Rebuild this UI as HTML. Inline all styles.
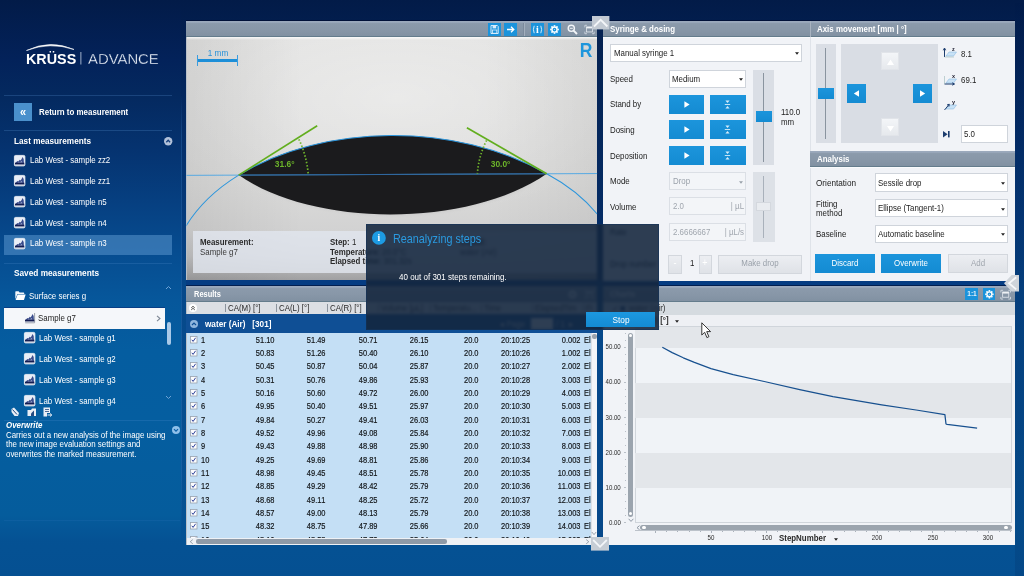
<!DOCTYPE html><html><head><meta charset="utf-8"><title>KRÜSS ADVANCE</title><style>
*{box-sizing:border-box;margin:0;padding:0}
html,body{width:1024px;height:576px;overflow:hidden}
body{position:relative;font-family:"Liberation Sans",sans-serif;font-size:7.9px;color:#222;
 background:linear-gradient(180deg,#021b48 0px,#032256 60px,#04306c 150px,#053c7d 220px,#06488a 290px,#064e90 420px,#055294 520px,#055092 576px)}
div{position:absolute}
.t{white-space:pre;line-height:14px;height:14px;transform:scaleX(0.878)}
.n{font-kerning:none;font-size:9px;color:#121518;transform:scaleX(0.83);-webkit-text-stroke:0.18px #121518}
.b{font-weight:bold}
.w{color:#fff}
.hdr{background:linear-gradient(180deg,#9caabd 0,#9aa8bb 1.3px,#8b9aab 2.6px,#8897a8 55%,#8191a2 100%);border-bottom:1px solid #647c8c;box-shadow:0 1px 0 #f9fafc,0 -1px 0 rgba(0,8,40,0.55)}
.pnl{background:#f1f3f7}
.combo{background:#fff;border:1px solid #cfd4db}
.dis{background:#f3f5f8;border:1px solid #dbdfe5}
.btn{background:linear-gradient(180deg,#1c95dc,#148bd2)}
.ubtn{background:linear-gradient(180deg,#f3f5f8,#e6e9ed);border:1px solid #e1e4e9}
.dbtn{background:linear-gradient(180deg,#eceef2,#dfe2e7);border:1px solid #d3d7dd}
svg{position:absolute;overflow:visible}
</style></head><body><div id="root" style="left:0;top:0;width:1024px;height:576px;will-change:transform">
<div style="left:0.0px;top:0.0px;width:181.0px;height:540.0px;background:linear-gradient(180deg,#021b48 0px,#03225a 60px,#04295f 95px,#053370 150px,#063f80 200px,#064c90 250px,#06579b 300px,#055da0 350px,#055ea0 420px,#055c9c 515px,#055294 540px)"></div>
<div style="left:180.7px;top:95.0px;width:1.0px;height:433.0px;background:linear-gradient(180deg,rgba(60,130,200,0),rgba(60,130,200,0.3) 40px,rgba(60,130,200,0.3) 380px,rgba(60,130,200,0))"></div>
<div style="left:4.0px;top:94.5px;width:168.0px;height:1.0px;background:rgba(90,150,215,0.25)"></div>
<div style="left:4.0px;top:130.0px;width:168.0px;height:1.0px;background:rgba(90,150,215,0.25)"></div>
<div style="left:4.0px;top:263.0px;width:168.0px;height:1.0px;background:rgba(90,150,215,0.22)"></div>
<div style="left:4.0px;top:420.0px;width:176.0px;height:1.0px;background:rgba(90,150,215,0.2)"></div>
<div style="left:4.0px;top:520.0px;width:176.0px;height:1.0px;background:rgba(90,150,215,0.1)"></div>
<svg style="left:24px;top:40px" width="140" height="28" viewBox="0 0 140 28"><path d="M2.5 10.5 Q26 -1 50 9.5 Q26 1.5 2.5 10.5Z" fill="#fff" stroke="#fff" stroke-width="0.6"/><rect x="56.5" y="12" width="0.8" height="12.5" fill="#c8d4e6"/></svg>
<div class="t" style="left:25.6px;transform-origin:0 50%;top:47.77px;font-size:15.10px;line-height:21px;height:21px;transform:scaleX(0.95);font-weight:bold;color:#fff">KRÜSS</div>
<div class="t" style="left:87.6px;transform-origin:0 50%;top:47.77px;font-size:15.10px;line-height:21px;height:21px;transform:scaleX(0.985);color:#eef2f8;-webkit-text-stroke:0.3px #04265e">ADVANCE</div>
<div style="left:14.0px;top:103.0px;width:18.0px;height:18.0px;background:#4a90cc"></div>
<div class="t" style="left:-77.0px;width:200px;text-align:center;transform-origin:50% 50%;top:104.97px;font-size:12.53px;color:#fff;font-weight:bold">«</div>
<div class="t" style="left:38.5px;transform-origin:0 50%;top:105.38px;font-size:9.00px;transform:scaleX(0.883);font-weight:bold;color:#fff">Return to measurement</div>
<div class="t" style="left:14.3px;transform-origin:0 50%;top:133.68px;font-size:9.00px;transform:scaleX(0.911);font-weight:bold;color:#fff">Last measurements</div>
<svg style="left:163.8px;top:136.5px" width="8.4" height="8.4" viewBox="0 0 8.4 8.4"><circle cx="4.2" cy="4.2" r="4.2" fill="#b2c1d9"/><path d="M2.3 5.2 L4.2 3.2 L6.1 5.2" stroke="#17407c" stroke-width="1.3" fill="none"/></svg>
<div style="left:4.0px;top:235.0px;width:168.0px;height:19.5px;background:rgba(90,150,205,0.55)"></div>
<svg style="left:14px;top:154.54999999999998px" width="11.3" height="11.3" viewBox="0 0 11.3 11.3"><rect x="0.4" y="0.4" width="10.5" height="10.5" rx="1.2" fill="#e9eef7" stroke="#f6f8fb" stroke-width="0.8"/><path d="M1.4 8 L3.4 5.9 L4.3 6.6 L5.8 4.7 L6.7 5.5 L8.7 2 L9.7 4.2 L9.9 8Z" fill="#3a4c8c"/><path d="M3.4 7.4 L4.4 6.9 L6 7.3 L7.6 6.2 L8.6 7.4Z" fill="#c7d0e6"/><rect x="1" y="7.7" width="9.3" height="1.9" fill="#141d52"/><rect x="1" y="9.6" width="9.3" height="0.9" fill="#b4bccd"/></svg>
<div class="t" style="left:29.5px;transform-origin:0 50%;top:153.18px;font-size:9.00px;color:#fff">Lab West - sample zz2</div>
<svg style="left:14px;top:175.25px" width="11.3" height="11.3" viewBox="0 0 11.3 11.3"><rect x="0.4" y="0.4" width="10.5" height="10.5" rx="1.2" fill="#e9eef7" stroke="#f6f8fb" stroke-width="0.8"/><path d="M1.4 8 L3.4 5.9 L4.3 6.6 L5.8 4.7 L6.7 5.5 L8.7 2 L9.7 4.2 L9.9 8Z" fill="#3a4c8c"/><path d="M3.4 7.4 L4.4 6.9 L6 7.3 L7.6 6.2 L8.6 7.4Z" fill="#c7d0e6"/><rect x="1" y="7.7" width="9.3" height="1.9" fill="#141d52"/><rect x="1" y="9.6" width="9.3" height="0.9" fill="#b4bccd"/></svg>
<div class="t" style="left:29.5px;transform-origin:0 50%;top:173.88px;font-size:9.00px;color:#fff">Lab West - sample zz1</div>
<svg style="left:14px;top:196.15px" width="11.3" height="11.3" viewBox="0 0 11.3 11.3"><rect x="0.4" y="0.4" width="10.5" height="10.5" rx="1.2" fill="#e9eef7" stroke="#f6f8fb" stroke-width="0.8"/><path d="M1.4 8 L3.4 5.9 L4.3 6.6 L5.8 4.7 L6.7 5.5 L8.7 2 L9.7 4.2 L9.9 8Z" fill="#3a4c8c"/><path d="M3.4 7.4 L4.4 6.9 L6 7.3 L7.6 6.2 L8.6 7.4Z" fill="#c7d0e6"/><rect x="1" y="7.7" width="9.3" height="1.9" fill="#141d52"/><rect x="1" y="9.6" width="9.3" height="0.9" fill="#b4bccd"/></svg>
<div class="t" style="left:29.5px;transform-origin:0 50%;top:194.78px;font-size:9.00px;color:#fff">Lab West - sample n5</div>
<svg style="left:14px;top:217.04999999999998px" width="11.3" height="11.3" viewBox="0 0 11.3 11.3"><rect x="0.4" y="0.4" width="10.5" height="10.5" rx="1.2" fill="#e9eef7" stroke="#f6f8fb" stroke-width="0.8"/><path d="M1.4 8 L3.4 5.9 L4.3 6.6 L5.8 4.7 L6.7 5.5 L8.7 2 L9.7 4.2 L9.9 8Z" fill="#3a4c8c"/><path d="M3.4 7.4 L4.4 6.9 L6 7.3 L7.6 6.2 L8.6 7.4Z" fill="#c7d0e6"/><rect x="1" y="7.7" width="9.3" height="1.9" fill="#141d52"/><rect x="1" y="9.6" width="9.3" height="0.9" fill="#b4bccd"/></svg>
<div class="t" style="left:29.5px;transform-origin:0 50%;top:215.68px;font-size:9.00px;color:#fff">Lab West - sample n4</div>
<svg style="left:14px;top:237.75px" width="11.3" height="11.3" viewBox="0 0 11.3 11.3"><rect x="0.4" y="0.4" width="10.5" height="10.5" rx="1.2" fill="#e9eef7" stroke="#f6f8fb" stroke-width="0.8"/><path d="M1.4 8 L3.4 5.9 L4.3 6.6 L5.8 4.7 L6.7 5.5 L8.7 2 L9.7 4.2 L9.9 8Z" fill="#3a4c8c"/><path d="M3.4 7.4 L4.4 6.9 L6 7.3 L7.6 6.2 L8.6 7.4Z" fill="#c7d0e6"/><rect x="1" y="7.7" width="9.3" height="1.9" fill="#141d52"/><rect x="1" y="9.6" width="9.3" height="0.9" fill="#b4bccd"/></svg>
<div class="t" style="left:29.5px;transform-origin:0 50%;top:236.38px;font-size:9.00px;color:#fff">Lab West - sample n3</div>
<div class="t" style="left:14.3px;transform-origin:0 50%;top:265.68px;font-size:9.00px;transform:scaleX(0.919);font-weight:bold;color:#fff">Saved measurements</div>
<svg style="left:14.8px;top:291.4px" width="11" height="9.2" viewBox="0 0 11 9.2"><path d="M0.3 0.9 Q0.3 0.3 0.9 0.3 H3.6 L4.6 1.5 H8.6 Q9.2 1.5 9.2 2.1 V3 H2.4 L0.3 8.2Z" fill="#f4f7fb"/><path d="M0.6 8.9 L2.6 3.6 H10.7 L8.9 8.9Z" fill="#fff"/></svg>
<div class="t" style="left:28.6px;transform-origin:0 50%;top:289.28px;font-size:9.00px;color:#fff">Surface series g</div>
<div style="left:4.0px;top:306.8px;width:161.0px;height:1.2px;background:#083e86"></div>
<div style="left:4.0px;top:308.0px;width:161.0px;height:20.6px;background:#f5f7fa"></div>
<svg style="left:24.4px;top:311.75px" width="11.3" height="11.3" viewBox="0 0 11.3 11.3"><path d="M10.6 1 V10.8 H1.2" stroke="#9aa0aa" stroke-width="1" fill="none"/><path d="M1.4 8 L3.4 5.9 L4.3 6.6 L5.8 4.7 L6.7 5.5 L8.7 2 L9.7 4.2 L9.9 8Z" fill="#3a4c8c"/><path d="M3.4 7.4 L4.4 6.9 L6 7.3 L7.6 6.2 L8.6 7.4Z" fill="#c7d0e6"/><rect x="1" y="7.7" width="9.3" height="1.9" fill="#141d52"/><rect x="1" y="9.6" width="9.3" height="0.9" fill="#b4bccd"/></svg>
<div class="t" style="left:37.8px;transform-origin:0 50%;top:310.78px;font-size:9.00px;color:#222">Sample g7</div>
<svg style="left:156px;top:315px" width="5" height="7" viewBox="0 0 5 7"><path d="M1 0.8 L4 3.5 L1 6.2" stroke="#7d8794" stroke-width="1.1" fill="none"/></svg>
<svg style="left:165px;top:285px" width="7" height="5" viewBox="0 0 7 5"><path d="M1 4 L3.5 1.5 L6 4" stroke="#6fa3d6" stroke-width="1" fill="none"/></svg>
<div style="left:166.7px;top:321.7px;width:4.3px;height:23.5px;background:#a9c9e8;border-radius:2px"></div>
<svg style="left:165px;top:395px" width="7" height="5" viewBox="0 0 7 5"><path d="M1 1 L3.5 3.5 L6 1" stroke="#6fa3d6" stroke-width="1" fill="none"/></svg>
<svg style="left:24.3px;top:332.05px" width="11.3" height="11.3" viewBox="0 0 11.3 11.3"><rect x="0.4" y="0.4" width="10.5" height="10.5" rx="1.2" fill="#e9eef7" stroke="#f6f8fb" stroke-width="0.8"/><path d="M1.4 8 L3.4 5.9 L4.3 6.6 L5.8 4.7 L6.7 5.5 L8.7 2 L9.7 4.2 L9.9 8Z" fill="#3a4c8c"/><path d="M3.4 7.4 L4.4 6.9 L6 7.3 L7.6 6.2 L8.6 7.4Z" fill="#c7d0e6"/><rect x="1" y="7.7" width="9.3" height="1.9" fill="#141d52"/><rect x="1" y="9.6" width="9.3" height="0.9" fill="#b4bccd"/></svg>
<div class="t" style="left:39.0px;transform-origin:0 50%;top:330.98px;font-size:9.00px;color:#fff">Lab West - sample g1</div>
<svg style="left:24.3px;top:352.85px" width="11.3" height="11.3" viewBox="0 0 11.3 11.3"><rect x="0.4" y="0.4" width="10.5" height="10.5" rx="1.2" fill="#e9eef7" stroke="#f6f8fb" stroke-width="0.8"/><path d="M1.4 8 L3.4 5.9 L4.3 6.6 L5.8 4.7 L6.7 5.5 L8.7 2 L9.7 4.2 L9.9 8Z" fill="#3a4c8c"/><path d="M3.4 7.4 L4.4 6.9 L6 7.3 L7.6 6.2 L8.6 7.4Z" fill="#c7d0e6"/><rect x="1" y="7.7" width="9.3" height="1.9" fill="#141d52"/><rect x="1" y="9.6" width="9.3" height="0.9" fill="#b4bccd"/></svg>
<div class="t" style="left:39.0px;transform-origin:0 50%;top:351.78px;font-size:9.00px;color:#fff">Lab West - sample g2</div>
<svg style="left:24.3px;top:373.85px" width="11.3" height="11.3" viewBox="0 0 11.3 11.3"><rect x="0.4" y="0.4" width="10.5" height="10.5" rx="1.2" fill="#e9eef7" stroke="#f6f8fb" stroke-width="0.8"/><path d="M1.4 8 L3.4 5.9 L4.3 6.6 L5.8 4.7 L6.7 5.5 L8.7 2 L9.7 4.2 L9.9 8Z" fill="#3a4c8c"/><path d="M3.4 7.4 L4.4 6.9 L6 7.3 L7.6 6.2 L8.6 7.4Z" fill="#c7d0e6"/><rect x="1" y="7.7" width="9.3" height="1.9" fill="#141d52"/><rect x="1" y="9.6" width="9.3" height="0.9" fill="#b4bccd"/></svg>
<div class="t" style="left:39.0px;transform-origin:0 50%;top:372.78px;font-size:9.00px;color:#fff">Lab West - sample g3</div>
<svg style="left:24.3px;top:394.65000000000003px" width="11.3" height="11.3" viewBox="0 0 11.3 11.3"><rect x="0.4" y="0.4" width="10.5" height="10.5" rx="1.2" fill="#e9eef7" stroke="#f6f8fb" stroke-width="0.8"/><path d="M1.4 8 L3.4 5.9 L4.3 6.6 L5.8 4.7 L6.7 5.5 L8.7 2 L9.7 4.2 L9.9 8Z" fill="#3a4c8c"/><path d="M3.4 7.4 L4.4 6.9 L6 7.3 L7.6 6.2 L8.6 7.4Z" fill="#c7d0e6"/><rect x="1" y="7.7" width="9.3" height="1.9" fill="#141d52"/><rect x="1" y="9.6" width="9.3" height="0.9" fill="#b4bccd"/></svg>
<div class="t" style="left:39.0px;transform-origin:0 50%;top:394.48px;font-size:9.00px;color:#fff">Lab West - sample g4</div>
<svg style="left:10.5px;top:407px" width="45" height="10" viewBox="0 0 45 10"><path d="M0.5 2 L3 0.5 L8 6 L7 9 L3.5 9 L0.5 5Z" fill="#e9eef5"/><path d="M1.5 2.5 L6 7.5" stroke="#234a80" stroke-width="1"/><path d="M16.5 3 H20 L21 1.5 H25 V9 H16.5Z" fill="#e9eef5"/><path d="M20 6.5 L23 3.5 V9 H20Z" fill="#234a80"/><path d="M32.5 0.5 H39 V6 H36 V9.5 H32.5Z" fill="#e9eef5"/><path d="M34 2.5 H38 M34 4.5 H38" stroke="#234a80" stroke-width="0.8"/><path d="M36.5 8 H40.5 M39 6.5 L40.8 8 L39 9.5" stroke="#e9eef5" stroke-width="1" fill="none"/></svg>
<div class="t" style="left:6.0px;transform-origin:0 50%;top:418.38px;font-size:9.00px;font-weight:bold;font-style:italic;color:#fff">Overwrite</div>
<div class="t" style="left:6.0px;transform-origin:0 50%;top:427.78px;font-size:9.00px;color:#fff">Carries out a new analysis of the image using</div>
<div class="t" style="left:6.0px;transform-origin:0 50%;top:437.38px;font-size:9.00px;color:#fff">the new image evaluation settings and</div>
<div class="t" style="left:6.0px;transform-origin:0 50%;top:446.98px;font-size:9.00px;color:#fff">overwrites the marked measurement.</div>
<svg style="left:172px;top:425.8px" width="8" height="8" viewBox="0 0 8 8"><circle cx="4" cy="4" r="4" fill="#8fc0ea"/><path d="M2 3.2 L4 5.2 L6 3.2" stroke="#0b5fa6" stroke-width="1.2" fill="none"/></svg>
<div style="left:186.0px;top:280.4px;width:829.0px;height:5.6px;background:#053c82"></div>
<div style="left:597.3px;top:21.0px;width:6.0px;height:259.4px;background:linear-gradient(180deg,#04204f,#05306c)"></div>
<div style="left:597.3px;top:286.0px;width:6.0px;height:258.7px;background:#06488a"></div>
<div style="left:1015.0px;top:0.0px;width:9.0px;height:576.0px;background:linear-gradient(180deg,rgba(0,10,50,0) 0,rgba(0,10,50,0.16) 250px,rgba(0,10,50,0.1) 576px)"></div>
<div class="hdr" style="left:186.0px;top:21.0px;width:411.3px;height:16.2px;"></div>
<div style="left:186.0px;top:37.2px;width:411.3px;height:243.2px;background:linear-gradient(180deg,#e2e2e1 0%,#dededd 35%,#dbdbda 60%,#d2d2d2 80%,#c4c4c5 90%,#adadae 97%,#a0a0a2 100%);border-left:1px solid #b9c0c8;overflow:hidden"><div style="left:0;top:0;width:412px;height:244px;background:radial-gradient(ellipse 260px 120px at 210px 60px,rgba(255,255,255,0.35),rgba(255,255,255,0) 100%)"></div><div style="left:0;top:0;width:412px;height:244px;background:linear-gradient(90deg,rgba(0,0,0,0.07),rgba(0,0,0,0) 28%,rgba(0,0,0,0) 72%,rgba(0,0,0,0.055))"></div><div style="left:0;top:0;width:412px;height:3px;background:linear-gradient(180deg,rgba(255,255,255,0.8),rgba(255,255,255,0))"></div></div>
<div style="left:487.5px;top:22.8px;width:13.0px;height:13.0px;background:#1b93db;"><svg style="left:0;top:0" width="13" height="13" viewBox="0 0 13 13"><path d="M3 2.5 H9.3 L10.2 3.4 V10.5 H3Z" fill="none" stroke="#d8ecfa" stroke-width="1"/><rect x="4.6" y="2.8" width="3.6" height="2.6" fill="#d8ecfa"/><rect x="4.4" y="7" width="4.4" height="3.2" fill="none" stroke="#d8ecfa" stroke-width="0.8"/></svg></div>
<div style="left:504.4px;top:22.8px;width:13.0px;height:13.0px;background:#1b93db;"><svg style="left:0;top:0" width="13" height="13" viewBox="0 0 13 13"><path d="M3 6.5 H9.6 M7 3.8 L9.8 6.5 L7 9.2" stroke="#fff" stroke-width="1.3" fill="none"/></svg></div>
<div style="left:523.2px;top:23.0px;width:1.0px;height:13.0px;background:#7b8a9c"></div>
<div style="left:524.2px;top:23.0px;width:1.0px;height:13.0px;background:#a3afbd"></div>
<div style="left:531.2px;top:22.8px;width:13.0px;height:13.0px;background:#1b93db;will-change:transform;"><svg style="left:0;top:0" width="13" height="13" viewBox="0 0 13 13"><text x="6.5" y="10" font-family="Liberation Serif" font-weight="bold" font-size="10" fill="#fff" text-anchor="middle">i</text><path d="M3.2 2.8 Q1.6 6.5 3.2 10.2 M9.8 2.8 Q11.4 6.5 9.8 10.2" stroke="#fff" stroke-width="0.8" fill="none"/></svg></div>
<div style="left:548.3px;top:22.8px;width:13.0px;height:13.0px;background:#1b93db;"><svg style="left:0;top:0" width="13" height="13" viewBox="0 0 13 13"><g transform="translate(6.5 6.5)"><circle r="2.55" fill="none" stroke="#fff" stroke-width="1.35"/><circle r="0.55" fill="#bfe0f6"/><rect x="-0.85" y="-4.35" width="1.7" height="1.5" fill="#fff" transform="rotate(0)"/><rect x="-0.85" y="-4.35" width="1.7" height="1.5" fill="#fff" transform="rotate(45)"/><rect x="-0.85" y="-4.35" width="1.7" height="1.5" fill="#fff" transform="rotate(90)"/><rect x="-0.85" y="-4.35" width="1.7" height="1.5" fill="#fff" transform="rotate(135)"/><rect x="-0.85" y="-4.35" width="1.7" height="1.5" fill="#fff" transform="rotate(180)"/><rect x="-0.85" y="-4.35" width="1.7" height="1.5" fill="#fff" transform="rotate(225)"/><rect x="-0.85" y="-4.35" width="1.7" height="1.5" fill="#fff" transform="rotate(270)"/><rect x="-0.85" y="-4.35" width="1.7" height="1.5" fill="#fff" transform="rotate(315)"/></g></svg></div>
<div style="left:566.0px;top:22.8px;width:13.0px;height:13.0px;"><svg style="left:0;top:0" width="13" height="13" viewBox="0 0 13 13"><circle cx="5.3" cy="5.3" r="3.1" fill="none" stroke="#f2f5f8" stroke-width="1.4"/><path d="M7.6 7.6 L11 11" stroke="#f2f5f8" stroke-width="1.9"/><path d="M3.8 5.3 H6.8" stroke="#f2f5f8" stroke-width="1"/></svg></div>
<div style="left:583.6px;top:24.0px;width:11.0px;height:11.0px;"><svg style="left:0;top:0" width="11" height="11" viewBox="0 0 13 13"><path d="M1 4 V1.5 H3.5 M9.5 1.5 H12 V4 M12 9 V11.5 H9.5 M3.5 11.5 H1 V9" stroke="#d3dae2" stroke-width="1" fill="none"/><rect x="3" y="3.6" width="7" height="5.8" fill="none" stroke="#dde3ea" stroke-width="1"/><rect x="3" y="3.2" width="7" height="2" fill="#eef1f5"/></svg></div>
<div style="left:196.6px;top:58.7px;width:41.3px;height:3.0px;background:#1d8fd8"></div>
<div style="left:196.6px;top:55.0px;width:1.0px;height:10.8px;background:#3a9de0"></div>
<div style="left:236.9px;top:55.0px;width:1.0px;height:10.8px;background:#3a9de0"></div>
<div class="t" style="left:117.6px;width:200px;text-align:center;transform-origin:50% 50%;top:45.58px;font-size:9.34px;color:#2a92d8">1 mm</div>
<div class="t" style="right:431.5px;transform-origin:100% 50%;top:42.96px;font-size:19.93px;color:#1e96dc;font-weight:bold">R</div>
<svg style="left:0;top:0;will-change:transform" width="1024" height="576" viewBox="0 0 1024 576">
<defs><clipPath id="imgclip"><rect x="186.5" y="37.2" width="410.8" height="243.2"/></clipPath>
<filter id="blur1" x="-10%" y="-30%" width="120%" height="160%"><feGaussianBlur stdDeviation="2.2"/></filter></defs>
<g clip-path="url(#imgclip)">
<path d="M250 181 C330 224 456 224 536 180 C456 212 330 212 250 181Z" fill="#9a9a9a" opacity="0.55" filter="url(#blur1)"/>
<path d="M238.7 175.1 C324 123.1 455.5 121.9 546.7 173.7 C470 227 315 228.5 238.7 175.1Z" fill="#1b1b1d"/>
<path d="M186 226 Q204 196.5 238.7 175.1 C324 123.1 455.5 121.9 546.7 173.7 Q578 190.5 597.2 214" fill="none" stroke="#2b95dc" stroke-width="1.05"/>
<path d="M186 175.35 L597.3 173.55" stroke="#4aa5e4" stroke-width="0.9"/>
<path d="M238.7 175.1 L546.7 173.7" stroke="#28588f" stroke-width="0.8"/>
<path d="M238.7 175.1 L317.2 125.7" stroke="#62ae1e" stroke-width="1.7"/>
<path d="M546.7 173.7 L466.9 127.8" stroke="#62ae1e" stroke-width="1.7"/>
<path d="M298.9 139.3 Q306.8 156 308.3 175" stroke="#6fb52c" stroke-width="1.7" stroke-dasharray="1.5 1.9" fill="none"/>
<path d="M486.6 140.3 Q478.6 156 477.4 173.6" stroke="#6fb52c" stroke-width="1.7" stroke-dasharray="1.5 1.9" fill="none"/>
<text transform="translate(274.8 167.2) scale(0.878 1)" font-family="Liberation Sans" font-weight="bold" font-size="9.6" fill="#6cb52a">31.6°</text>
<text transform="translate(490.7 166.5) scale(0.878 1)" font-family="Liberation Sans" font-weight="bold" font-size="9.6" fill="#6cb52a">30.0°</text>
</g></svg>
<div style="left:192.9px;top:230.7px;width:404.4px;height:42.6px;background:rgba(224,229,238,0.82)"></div>
<div class="t" style="left:199.8px;transform-origin:0 50%;top:234.88px;font-size:9.00px;font-weight:bold;color:#2a2a2a">Measurement:</div>
<div class="t" style="left:199.8px;transform-origin:0 50%;top:244.58px;font-size:9.00px;color:#3a3a3a">Sample g7</div>
<div class="t" style="left:329.7px;transform-origin:0 50%;top:234.88px;font-size:9.00px;color:#2a2a2a"><b>Step:</b> 1</div>
<div class="t" style="left:329.7px;transform-origin:0 50%;top:244.58px;font-size:9.00px;color:#2a2a2a"><b>Temperature:</b> 20.0°C</div>
<div class="t" style="left:329.7px;transform-origin:0 50%;top:253.78px;font-size:9.00px;color:#2a2a2a"><b>Elapsed time:</b> 301.32s</div>
<div class="t" style="left:460.0px;transform-origin:0 50%;top:234.88px;font-size:9.00px;color:#2a2a2a"><b>Liquid:</b></div>
<div class="t" style="left:460.0px;transform-origin:0 50%;top:244.58px;font-size:9.00px;color:#3a3a3a">water (Air)</div>
<div class="pnl" style="left:603.0px;top:21.0px;width:412.0px;height:259.5px;"></div>
<div class="hdr" style="left:603.0px;top:21.0px;width:412.0px;height:16.0px;"></div>
<div style="left:809.5px;top:21.0px;width:1.0px;height:259.5px;background:#dfe3e9"></div>
<div style="left:809.5px;top:21.0px;width:1.0px;height:16.0px;background:#a8b3c0"></div>
<div class="t" style="left:610.0px;transform-origin:0 50%;top:21.98px;font-size:9.00px;font-weight:bold;color:#fff">Syringe &amp; dosing</div>
<div class="t" style="left:816.9px;transform-origin:0 50%;top:21.98px;font-size:9.00px;font-weight:bold;color:#fff">Axis movement [mm | °]</div>
<div class="combo" style="left:610.0px;top:43.5px;width:192.0px;height:18.8px;"></div>
<div class="t" style="left:613.6px;transform-origin:0 50%;top:45.98px;font-size:9.00px;color:#222">Manual syringe 1</div>
<svg style="left:795.0px;top:52.4px" width="4" height="3" viewBox="0 0 4 3"><path d="M0 0.3 H4 L2 2.7Z" fill="#222"/></svg>
<div class="t" style="left:610.0px;transform-origin:0 50%;top:71.78px;font-size:9.00px;color:#222">Speed</div>
<div class="t" style="left:610.0px;transform-origin:0 50%;top:97.28px;font-size:9.00px;color:#222">Stand by</div>
<div class="t" style="left:610.0px;transform-origin:0 50%;top:122.98px;font-size:9.00px;color:#222">Dosing</div>
<div class="t" style="left:610.0px;transform-origin:0 50%;top:148.58px;font-size:9.00px;color:#222">Deposition</div>
<div class="t" style="left:610.0px;transform-origin:0 50%;top:173.88px;font-size:9.00px;color:#222">Mode</div>
<div class="t" style="left:610.0px;transform-origin:0 50%;top:199.88px;font-size:9.00px;color:#222">Volume</div>
<div class="t" style="left:610.0px;transform-origin:0 50%;top:225.38px;font-size:9.00px;color:#222">Rate</div>
<div class="t" style="left:610.0px;transform-origin:0 50%;top:256.98px;font-size:9.00px;color:#222">Drop number</div>
<div class="combo" style="left:668.6px;top:69.5px;width:77.1px;height:18.3px;"></div>
<div class="t" style="left:672.2px;transform-origin:0 50%;top:71.73px;font-size:9.00px;color:#222">Medium</div>
<svg style="left:738.7px;top:78.2px" width="4" height="3" viewBox="0 0 4 3"><path d="M0 0.3 H4 L2 2.7Z" fill="#222"/></svg>
<div class="btn" style="left:668.6px;top:95.0px;width:35.0px;height:18.7px;"><svg style="left:11px;top:2.85px" width="13" height="13" viewBox="0 0 13 13"><path d="M4.4 3.2 L9.6 6.5 L4.4 9.8Z" fill="#fff"/></svg></div>
<div class="btn" style="left:710.0px;top:95.0px;width:35.7px;height:18.7px;"><svg style="left:11.3px;top:2.85px" width="13" height="13" viewBox="0 0 13 13"><path d="M4.4 2.6 H8.6 L6.5 5Z M4.4 10.4 H8.6 L6.5 8Z" fill="#d6ecfa"/><path d="M3.8 6.5 H9.2" stroke="#d6ecfa" stroke-width="0.9"/></svg></div>
<div class="btn" style="left:668.6px;top:120.4px;width:35.0px;height:18.7px;"><svg style="left:11px;top:2.85px" width="13" height="13" viewBox="0 0 13 13"><path d="M4.4 3.2 L9.6 6.5 L4.4 9.8Z" fill="#fff"/></svg></div>
<div class="btn" style="left:710.0px;top:120.4px;width:35.7px;height:18.7px;"><svg style="left:11.3px;top:2.85px" width="13" height="13" viewBox="0 0 13 13"><path d="M4.4 2.6 H8.6 L6.5 5Z M4.4 10.4 H8.6 L6.5 8Z" fill="#d6ecfa"/><path d="M3.8 6.5 H9.2" stroke="#d6ecfa" stroke-width="0.9"/></svg></div>
<div class="btn" style="left:668.6px;top:146.3px;width:35.0px;height:18.7px;"><svg style="left:11px;top:2.85px" width="13" height="13" viewBox="0 0 13 13"><path d="M4.4 3.2 L9.6 6.5 L4.4 9.8Z" fill="#fff"/></svg></div>
<div class="btn" style="left:710.0px;top:146.3px;width:35.7px;height:18.7px;"><svg style="left:11.3px;top:2.85px" width="13" height="13" viewBox="0 0 13 13"><path d="M4.4 2.6 H8.6 L6.5 5Z M4.4 10.4 H8.6 L6.5 8Z" fill="#d6ecfa"/><path d="M3.8 6.5 H9.2" stroke="#d6ecfa" stroke-width="0.9"/></svg></div>
<div style="left:753.0px;top:69.5px;width:21.4px;height:95.5px;background:#dadee5"></div>
<div style="left:762.8px;top:73.0px;width:1.0px;height:88.5px;background:#8a949f"></div>
<div class="btn" style="left:755.5px;top:111.0px;width:16.5px;height:11.0px;"></div>
<div class="t" style="left:781.0px;transform-origin:0 50%;top:105.18px;font-size:9.00px;color:#222">110.0</div>
<div class="t" style="left:781.0px;transform-origin:0 50%;top:115.28px;font-size:9.00px;color:#222">mm</div>
<div class="dis" style="left:669.2px;top:172.0px;width:76.4px;height:18.2px;"></div>
<div class="t" style="left:672.8px;transform-origin:0 50%;top:174.18px;font-size:9.00px;color:#9aa1aa">Drop</div>
<svg style="left:738.6px;top:180.6px" width="4" height="3" viewBox="0 0 4 3"><path d="M0 0.3 H4 L2 2.7Z" fill="#9aa1aa"/></svg>
<div class="dis" style="left:669.2px;top:197.3px;width:76.4px;height:18.2px;"></div>
<div class="t" style="left:672.5px;transform-origin:0 50%;top:199.48px;font-size:9.00px;color:#a0a6ae">2.0</div>
<div class="t" style="right:280.4px;transform-origin:100% 50%;top:199.48px;font-size:9.00px;color:#a0a6ae">| µL</div>
<div class="dis" style="left:669.2px;top:223.3px;width:76.4px;height:18.2px;"></div>
<div class="t" style="left:672.5px;transform-origin:0 50%;top:225.48px;font-size:9.00px;color:#a0a6ae">2.6666667</div>
<div class="t" style="right:280.4px;transform-origin:100% 50%;top:225.48px;font-size:9.00px;color:#a0a6ae">| µL/s</div>
<div style="left:753.3px;top:172.0px;width:21.3px;height:69.5px;background:#dde1e7"></div>
<div style="left:762.8px;top:176.0px;width:1.0px;height:62.0px;background:#a9b1bb"></div>
<div style="left:756.4px;top:201.7px;width:15.0px;height:9.2px;background:#e9ecf0;border:1px solid #d4d8de"></div>
<div class="dbtn" style="left:668.4px;top:254.6px;width:13.3px;height:19.0px;"></div>
<div class="t" style="left:575.0px;width:200px;text-align:center;transform-origin:50% 50%;top:256.28px;font-size:10.25px;color:#fff">-</div>
<div class="t" style="left:689.5px;transform-origin:0 50%;top:256.18px;font-size:9.00px;color:#222">1</div>
<div class="dbtn" style="left:698.6px;top:254.6px;width:13.0px;height:19.0px;"></div>
<div class="t" style="left:605.1px;width:200px;text-align:center;transform-origin:50% 50%;top:256.48px;font-size:10.25px;color:#fff">+</div>
<div class="dbtn" style="left:718.1px;top:254.6px;width:84.0px;height:19.0px;"></div>
<div class="t" style="left:660.0px;width:200px;text-align:center;transform-origin:50% 50%;top:256.18px;font-size:9.00px;color:#9aa1aa">Make drop</div>
<div style="left:816.0px;top:44.0px;width:19.8px;height:99.2px;background:#dadee5"></div>
<div style="left:825.0px;top:47.7px;width:1.0px;height:91.0px;background:#8a949f"></div>
<div class="btn" style="left:818.0px;top:87.8px;width:16.0px;height:11.0px;"></div>
<div style="left:840.7px;top:44.0px;width:97.7px;height:99.2px;background:#d9dde4"></div>
<div class="ubtn" style="left:880.6px;top:51.8px;width:18.6px;height:18.7px;"><svg style="left:2.8px;top:2.85px" width="13" height="13" viewBox="0 0 13 13"><path d="M3 9 L6.5 3.6 L10 9Z" fill="#fff"/></svg></div>
<div class="ubtn" style="left:880.6px;top:117.7px;width:18.6px;height:18.7px;"><svg style="left:2.8px;top:2.85px" width="13" height="13" viewBox="0 0 13 13"><path d="M3 4 L6.5 9.4 L10 4Z" fill="#fff"/></svg></div>
<div class="btn" style="left:847.4px;top:84.1px;width:18.6px;height:18.7px;"><svg style="left:2.8px;top:2.85px" width="13" height="13" viewBox="0 0 13 13"><path d="M9 3.2 L3.8 6.5 L9 9.8Z" fill="#fff"/></svg></div>
<div class="btn" style="left:913.2px;top:84.1px;width:18.6px;height:18.7px;"><svg style="left:2.8px;top:2.85px" width="13" height="13" viewBox="0 0 13 13"><path d="M4 3.2 L9.2 6.5 L4 9.8Z" fill="#fff"/></svg></div>
<svg style="left:942.5px;top:47.3px;will-change:transform" width="14" height="12" viewBox="0 0 14 12"><path d="M3 9 L6 5 H13.5 L10.5 9Z" fill="#c9e2f6" stroke="#7fb2de" stroke-width="0.5"/><path d="M1.5 10 V1.5 M0.3 3.3 L1.5 1 L2.7 3.3" stroke="#1d3d6e" stroke-width="1" fill="none"/><path d="M1.5 10 H11" stroke="#8aa" stroke-width="0.5"/><text x="9" y="4.4" font-family="Liberation Sans" font-weight="bold" font-size="5.5" fill="#223">z</text></svg>
<svg style="left:942.5px;top:74.0px;will-change:transform" width="14" height="12" viewBox="0 0 14 12"><path d="M3 9 L6 5 H13.5 L10.5 9Z" fill="#c9e2f6" stroke="#7fb2de" stroke-width="0.5"/><path d="M1.5 10 H11 M9.2 8.8 L11.6 10 L9.2 11.2" stroke="#1d3d6e" stroke-width="1" fill="none"/><path d="M1.5 10 V2" stroke="#8aa" stroke-width="0.5"/><text x="9" y="4.4" font-family="Liberation Sans" font-weight="bold" font-size="5.5" fill="#223">x</text></svg>
<svg style="left:942.5px;top:100.0px;will-change:transform" width="14" height="12" viewBox="0 0 14 12"><path d="M3 9 L6 5 H13.5 L10.5 9Z" fill="#c9e2f6" stroke="#7fb2de" stroke-width="0.5"/><path d="M1.5 10 L6 4.5 M4 5 L6.2 4.2 L5.9 6.6" stroke="#1d3d6e" stroke-width="1" fill="none"/><text x="9" y="4.4" font-family="Liberation Sans" font-weight="bold" font-size="5.5" fill="#223">y</text></svg>
<div class="t" style="left:961.0px;transform-origin:0 50%;top:46.78px;font-size:9.00px;color:#222">8.1</div>
<div class="t" style="left:961.0px;transform-origin:0 50%;top:73.48px;font-size:9.00px;color:#222">69.1</div>
<svg style="left:942.8px;top:130.8px" width="7" height="6.4" viewBox="0 0 7 6.4"><path d="M0 0 L4.6 3.2 L0 6.4Z" fill="#1d3d6e"/><rect x="5" y="0" width="1.6" height="6.4" fill="#1d3d6e"/></svg>
<div class="combo" style="left:961.0px;top:124.7px;width:46.7px;height:18.5px;"></div>
<div class="t" style="left:964.4px;transform-origin:0 50%;top:126.98px;font-size:9.00px;color:#222">5.0</div>
<div class="hdr" style="left:809.7px;top:151.1px;width:205.3px;height:16.0px;box-shadow:0 1px 0 #f9fafc"></div>
<div class="t" style="left:816.7px;transform-origin:0 50%;top:151.88px;font-size:9.00px;font-weight:bold;color:#fff">Analysis</div>
<div class="t" style="left:815.8px;transform-origin:0 50%;top:175.98px;font-size:9.00px;transform:scaleX(0.909);">Orientation</div>
<div class="combo" style="left:874.5px;top:173.4px;width:133.1px;height:18.3px;"></div>
<div class="t" style="left:878.1px;transform-origin:0 50%;top:175.63px;font-size:9.00px;color:#222">Sessile drop</div>
<svg style="left:1000.6px;top:182.1px" width="4" height="3" viewBox="0 0 4 3"><path d="M0 0.3 H4 L2 2.7Z" fill="#222"/></svg>
<div class="t" style="left:815.8px;transform-origin:0 50%;top:196.88px;font-size:9.00px;">Fitting</div>
<div class="t" style="left:815.8px;transform-origin:0 50%;top:206.08px;font-size:9.00px;">method</div>
<div class="combo" style="left:874.5px;top:198.9px;width:133.1px;height:18.4px;"></div>
<div class="t" style="left:878.1px;transform-origin:0 50%;top:201.18px;font-size:9.00px;color:#222">Ellipse (Tangent-1)</div>
<svg style="left:1000.6px;top:207.6px" width="4" height="3" viewBox="0 0 4 3"><path d="M0 0.3 H4 L2 2.7Z" fill="#222"/></svg>
<div class="t" style="left:815.8px;transform-origin:0 50%;top:226.88px;font-size:9.00px;">Baseline</div>
<div class="combo" style="left:874.5px;top:224.8px;width:133.1px;height:18.2px;"></div>
<div class="t" style="left:878.1px;transform-origin:0 50%;top:226.98px;font-size:9.00px;color:#222">Automatic baseline</div>
<svg style="left:1000.6px;top:233.4px" width="4" height="3" viewBox="0 0 4 3"><path d="M0 0.3 H4 L2 2.7Z" fill="#222"/></svg>
<div class="btn" style="left:815.0px;top:254.0px;width:60.0px;height:19.4px;"></div>
<div class="t" style="left:745.0px;width:200px;text-align:center;transform-origin:50% 50%;top:256.48px;font-size:9.00px;color:#fff">Discard</div>
<div class="btn" style="left:881.4px;top:254.0px;width:59.5px;height:19.4px;"></div>
<div class="t" style="left:811.2px;width:200px;text-align:center;transform-origin:50% 50%;top:256.48px;font-size:9.00px;color:#fff">Overwrite</div>
<div class="dbtn" style="left:947.9px;top:254.0px;width:60.0px;height:19.4px;"></div>
<div class="t" style="left:878.0px;width:200px;text-align:center;transform-origin:50% 50%;top:256.48px;font-size:9.00px;color:#a0a6ae">Add</div>
<div class="hdr" style="left:186.0px;top:286.0px;width:411.3px;height:15.6px;"></div>
<div class="t" style="left:193.5px;transform-origin:0 50%;top:286.68px;font-size:9.00px;transform:scaleX(0.828);font-weight:bold;color:#fff">Results</div>
<div style="left:566.0px;top:287.5px;width:13.0px;height:13.0px;"><svg style="left:0;top:0" width="13" height="13" viewBox="0 0 13 13"><g transform="translate(6.5 6.5)"><circle r="2.55" fill="none" stroke="#fff" stroke-width="1.35"/><circle r="0.55" fill="#bfe0f6"/><rect x="-0.85" y="-4.35" width="1.7" height="1.5" fill="#fff" transform="rotate(0)"/><rect x="-0.85" y="-4.35" width="1.7" height="1.5" fill="#fff" transform="rotate(45)"/><rect x="-0.85" y="-4.35" width="1.7" height="1.5" fill="#fff" transform="rotate(90)"/><rect x="-0.85" y="-4.35" width="1.7" height="1.5" fill="#fff" transform="rotate(135)"/><rect x="-0.85" y="-4.35" width="1.7" height="1.5" fill="#fff" transform="rotate(180)"/><rect x="-0.85" y="-4.35" width="1.7" height="1.5" fill="#fff" transform="rotate(225)"/><rect x="-0.85" y="-4.35" width="1.7" height="1.5" fill="#fff" transform="rotate(270)"/><rect x="-0.85" y="-4.35" width="1.7" height="1.5" fill="#fff" transform="rotate(315)"/></g></svg></div>
<div style="left:583.6px;top:288.6px;width:11.0px;height:11.0px;"><svg style="left:0;top:0" width="11" height="11" viewBox="0 0 13 13"><path d="M1 4 V1.5 H3.5 M9.5 1.5 H12 V4 M12 9 V11.5 H9.5 M3.5 11.5 H1 V9" stroke="#d3dae2" stroke-width="1" fill="none"/><rect x="3" y="3.6" width="7" height="5.8" fill="none" stroke="#dde3ea" stroke-width="1"/><rect x="3" y="3.2" width="7" height="2" fill="#eef1f5"/></svg></div>
<div style="left:186.0px;top:301.5px;width:411.3px;height:13.0px;background:#dcdfe4;border-left:1px solid #b9c0c8"></div>
<svg style="left:189.3px;top:303.9px" width="8" height="8" viewBox="0 0 8 8"><circle cx="4" cy="4" r="4" fill="#fff"/><path d="M2.2 3.9 L4 2.3 L5.8 3.9 M2.2 5.9 L4 4.3 L5.8 5.9" stroke="#444" stroke-width="0.9" fill="none"/></svg>
<div style="left:225.1px;top:304.0px;width:0.9px;height:8.0px;background:#8b939d"></div>
<div class="t" style="left:228.1px;transform-origin:0 50%;top:300.98px;font-size:9.00px;color:#2a2a2a">CA(M) [°]</div>
<div style="left:276.2px;top:304.0px;width:0.9px;height:8.0px;background:#8b939d"></div>
<div class="t" style="left:279.2px;transform-origin:0 50%;top:300.98px;font-size:9.00px;color:#2a2a2a">CA(L) [°]</div>
<div style="left:327.3px;top:304.0px;width:0.9px;height:8.0px;background:#8b939d"></div>
<div class="t" style="left:330.3px;transform-origin:0 50%;top:300.98px;font-size:9.00px;color:#2a2a2a">CA(R) [°]</div>
<div style="left:378.4px;top:304.0px;width:0.9px;height:8.0px;background:#8b939d"></div>
<div class="t" style="left:381.4px;transform-origin:0 50%;top:300.98px;font-size:9.00px;color:#2a2a2a">Volume [µL]</div>
<div style="left:429.5px;top:304.0px;width:0.9px;height:8.0px;background:#8b939d"></div>
<div class="t" style="left:432.5px;transform-origin:0 50%;top:300.98px;font-size:9.00px;color:#2a2a2a">Temperatu...</div>
<div style="left:480.6px;top:304.0px;width:0.9px;height:8.0px;background:#8b939d"></div>
<div class="t" style="left:483.6px;transform-origin:0 50%;top:300.98px;font-size:9.00px;color:#2a2a2a">Time</div>
<div style="left:531.7px;top:304.0px;width:0.9px;height:8.0px;background:#8b939d"></div>
<div class="t" style="left:534.7px;transform-origin:0 50%;top:300.98px;font-size:9.00px;color:#2a2a2a">ElapsedTim</div>
<div style="left:582.8px;top:304.0px;width:0.9px;height:8.0px;background:#8b939d"></div>
<div class="t" style="left:585.8px;transform-origin:0 50%;top:300.98px;font-size:9.00px;color:#2a2a2a">Fi</div>
<div style="left:186.0px;top:314.4px;width:411.3px;height:18.3px;background:#0f4f95"></div>
<svg style="left:189.5px;top:319.8px" width="8" height="8" viewBox="0 0 8 8"><circle cx="4" cy="4" r="4" fill="#8fb6de"/><path d="M2 5 L4 3 L6 5" stroke="#0f4f95" stroke-width="1.2" fill="none"/></svg>
<div class="t" style="left:204.7px;transform-origin:0 50%;top:316.78px;font-size:9.34px;font-weight:bold;color:#fff">water (Air)   [301]</div>
<div class="t" style="left:500.0px;transform-origin:0 50%;top:316.78px;font-size:9.00px;color:#dfe8f3">◂ Page</div>
<div style="left:531.0px;top:318.0px;width:22.0px;height:11.0px;background:#fff"></div>
<div class="t" style="left:556.0px;transform-origin:0 50%;top:316.78px;font-size:9.00px;color:#dfe8f3">/ 1  ▸</div>
<div style="left:186.0px;top:332.6px;width:404.8px;height:206.0px;background:#c4dff5;border-left:1px solid #b9c0c8;overflow:hidden"></div>
<div style="left:186px;top:332.6px;width:404.8px;height:205.8px;overflow:hidden">
<svg style="left:3.6px;top:3.2px" width="7.4" height="7.4" viewBox="0 0 7.4 7.4"><rect x="0.4" y="0.4" width="6.6" height="6.6" fill="#fdfdfe" stroke="#98a2ae" stroke-width="0.8"/><path d="M1.8 3.8 L3.1 5.4 L5.6 1.8" stroke="#2b3f9a" stroke-width="1" fill="none"/></svg>
<div class="t n" style="left:14.8px;transform-origin:0 50%;top:0.18px">1</div>
<div class="t n" style="right:315.8px;transform-origin:100% 50%;top:0.18px">51.10</div>
<div class="t n" style="right:264.8px;transform-origin:100% 50%;top:0.18px">51.49</div>
<div class="t n" style="right:213.6px;transform-origin:100% 50%;top:0.18px">50.71</div>
<div class="t n" style="right:162.6px;transform-origin:100% 50%;top:0.18px">26.15</div>
<div class="t n" style="right:112.1px;transform-origin:100% 50%;top:0.18px">20.0</div>
<div class="t n" style="left:314.6px;transform-origin:0 50%;top:0.18px">20:10:25</div>
<div class="t n" style="right:10.7px;transform-origin:100% 50%;top:0.18px">0.002</div>
<div class="t n" style="left:398.4px;transform-origin:0 50%;top:0.18px">El</div>
<svg style="left:3.6px;top:16.5px" width="7.4" height="7.4" viewBox="0 0 7.4 7.4"><rect x="0.4" y="0.4" width="6.6" height="6.6" fill="#fdfdfe" stroke="#98a2ae" stroke-width="0.8"/><path d="M1.8 3.8 L3.1 5.4 L5.6 1.8" stroke="#2b3f9a" stroke-width="1" fill="none"/></svg>
<div class="t n" style="left:14.8px;transform-origin:0 50%;top:13.50px">2</div>
<div class="t n" style="right:315.8px;transform-origin:100% 50%;top:13.50px">50.83</div>
<div class="t n" style="right:264.8px;transform-origin:100% 50%;top:13.50px">51.26</div>
<div class="t n" style="right:213.6px;transform-origin:100% 50%;top:13.50px">50.40</div>
<div class="t n" style="right:162.6px;transform-origin:100% 50%;top:13.50px">26.10</div>
<div class="t n" style="right:112.1px;transform-origin:100% 50%;top:13.50px">20.0</div>
<div class="t n" style="left:314.6px;transform-origin:0 50%;top:13.50px">20:10:26</div>
<div class="t n" style="right:10.7px;transform-origin:100% 50%;top:13.50px">1.002</div>
<div class="t n" style="left:398.4px;transform-origin:0 50%;top:13.50px">El</div>
<svg style="left:3.6px;top:29.8px" width="7.4" height="7.4" viewBox="0 0 7.4 7.4"><rect x="0.4" y="0.4" width="6.6" height="6.6" fill="#fdfdfe" stroke="#98a2ae" stroke-width="0.8"/><path d="M1.8 3.8 L3.1 5.4 L5.6 1.8" stroke="#2b3f9a" stroke-width="1" fill="none"/></svg>
<div class="t n" style="left:14.8px;transform-origin:0 50%;top:26.82px">3</div>
<div class="t n" style="right:315.8px;transform-origin:100% 50%;top:26.82px">50.45</div>
<div class="t n" style="right:264.8px;transform-origin:100% 50%;top:26.82px">50.87</div>
<div class="t n" style="right:213.6px;transform-origin:100% 50%;top:26.82px">50.04</div>
<div class="t n" style="right:162.6px;transform-origin:100% 50%;top:26.82px">25.87</div>
<div class="t n" style="right:112.1px;transform-origin:100% 50%;top:26.82px">20.0</div>
<div class="t n" style="left:314.6px;transform-origin:0 50%;top:26.82px">20:10:27</div>
<div class="t n" style="right:10.7px;transform-origin:100% 50%;top:26.82px">2.002</div>
<div class="t n" style="left:398.4px;transform-origin:0 50%;top:26.82px">El</div>
<svg style="left:3.6px;top:43.2px" width="7.4" height="7.4" viewBox="0 0 7.4 7.4"><rect x="0.4" y="0.4" width="6.6" height="6.6" fill="#fdfdfe" stroke="#98a2ae" stroke-width="0.8"/><path d="M1.8 3.8 L3.1 5.4 L5.6 1.8" stroke="#2b3f9a" stroke-width="1" fill="none"/></svg>
<div class="t n" style="left:14.8px;transform-origin:0 50%;top:40.14px">4</div>
<div class="t n" style="right:315.8px;transform-origin:100% 50%;top:40.14px">50.31</div>
<div class="t n" style="right:264.8px;transform-origin:100% 50%;top:40.14px">50.76</div>
<div class="t n" style="right:213.6px;transform-origin:100% 50%;top:40.14px">49.86</div>
<div class="t n" style="right:162.6px;transform-origin:100% 50%;top:40.14px">25.93</div>
<div class="t n" style="right:112.1px;transform-origin:100% 50%;top:40.14px">20.0</div>
<div class="t n" style="left:314.6px;transform-origin:0 50%;top:40.14px">20:10:28</div>
<div class="t n" style="right:10.7px;transform-origin:100% 50%;top:40.14px">3.003</div>
<div class="t n" style="left:398.4px;transform-origin:0 50%;top:40.14px">El</div>
<svg style="left:3.6px;top:56.5px" width="7.4" height="7.4" viewBox="0 0 7.4 7.4"><rect x="0.4" y="0.4" width="6.6" height="6.6" fill="#fdfdfe" stroke="#98a2ae" stroke-width="0.8"/><path d="M1.8 3.8 L3.1 5.4 L5.6 1.8" stroke="#2b3f9a" stroke-width="1" fill="none"/></svg>
<div class="t n" style="left:14.8px;transform-origin:0 50%;top:53.46px">5</div>
<div class="t n" style="right:315.8px;transform-origin:100% 50%;top:53.46px">50.16</div>
<div class="t n" style="right:264.8px;transform-origin:100% 50%;top:53.46px">50.60</div>
<div class="t n" style="right:213.6px;transform-origin:100% 50%;top:53.46px">49.72</div>
<div class="t n" style="right:162.6px;transform-origin:100% 50%;top:53.46px">26.00</div>
<div class="t n" style="right:112.1px;transform-origin:100% 50%;top:53.46px">20.0</div>
<div class="t n" style="left:314.6px;transform-origin:0 50%;top:53.46px">20:10:29</div>
<div class="t n" style="right:10.7px;transform-origin:100% 50%;top:53.46px">4.003</div>
<div class="t n" style="left:398.4px;transform-origin:0 50%;top:53.46px">El</div>
<svg style="left:3.6px;top:69.8px" width="7.4" height="7.4" viewBox="0 0 7.4 7.4"><rect x="0.4" y="0.4" width="6.6" height="6.6" fill="#fdfdfe" stroke="#98a2ae" stroke-width="0.8"/><path d="M1.8 3.8 L3.1 5.4 L5.6 1.8" stroke="#2b3f9a" stroke-width="1" fill="none"/></svg>
<div class="t n" style="left:14.8px;transform-origin:0 50%;top:66.78px">6</div>
<div class="t n" style="right:315.8px;transform-origin:100% 50%;top:66.78px">49.95</div>
<div class="t n" style="right:264.8px;transform-origin:100% 50%;top:66.78px">50.40</div>
<div class="t n" style="right:213.6px;transform-origin:100% 50%;top:66.78px">49.51</div>
<div class="t n" style="right:162.6px;transform-origin:100% 50%;top:66.78px">25.97</div>
<div class="t n" style="right:112.1px;transform-origin:100% 50%;top:66.78px">20.0</div>
<div class="t n" style="left:314.6px;transform-origin:0 50%;top:66.78px">20:10:30</div>
<div class="t n" style="right:10.7px;transform-origin:100% 50%;top:66.78px">5.003</div>
<div class="t n" style="left:398.4px;transform-origin:0 50%;top:66.78px">El</div>
<svg style="left:3.6px;top:83.1px" width="7.4" height="7.4" viewBox="0 0 7.4 7.4"><rect x="0.4" y="0.4" width="6.6" height="6.6" fill="#fdfdfe" stroke="#98a2ae" stroke-width="0.8"/><path d="M1.8 3.8 L3.1 5.4 L5.6 1.8" stroke="#2b3f9a" stroke-width="1" fill="none"/></svg>
<div class="t n" style="left:14.8px;transform-origin:0 50%;top:80.10px">7</div>
<div class="t n" style="right:315.8px;transform-origin:100% 50%;top:80.10px">49.84</div>
<div class="t n" style="right:264.8px;transform-origin:100% 50%;top:80.10px">50.27</div>
<div class="t n" style="right:213.6px;transform-origin:100% 50%;top:80.10px">49.41</div>
<div class="t n" style="right:162.6px;transform-origin:100% 50%;top:80.10px">26.03</div>
<div class="t n" style="right:112.1px;transform-origin:100% 50%;top:80.10px">20.0</div>
<div class="t n" style="left:314.6px;transform-origin:0 50%;top:80.10px">20:10:31</div>
<div class="t n" style="right:10.7px;transform-origin:100% 50%;top:80.10px">6.003</div>
<div class="t n" style="left:398.4px;transform-origin:0 50%;top:80.10px">El</div>
<svg style="left:3.6px;top:96.4px" width="7.4" height="7.4" viewBox="0 0 7.4 7.4"><rect x="0.4" y="0.4" width="6.6" height="6.6" fill="#fdfdfe" stroke="#98a2ae" stroke-width="0.8"/><path d="M1.8 3.8 L3.1 5.4 L5.6 1.8" stroke="#2b3f9a" stroke-width="1" fill="none"/></svg>
<div class="t n" style="left:14.8px;transform-origin:0 50%;top:93.42px">8</div>
<div class="t n" style="right:315.8px;transform-origin:100% 50%;top:93.42px">49.52</div>
<div class="t n" style="right:264.8px;transform-origin:100% 50%;top:93.42px">49.96</div>
<div class="t n" style="right:213.6px;transform-origin:100% 50%;top:93.42px">49.08</div>
<div class="t n" style="right:162.6px;transform-origin:100% 50%;top:93.42px">25.84</div>
<div class="t n" style="right:112.1px;transform-origin:100% 50%;top:93.42px">20.0</div>
<div class="t n" style="left:314.6px;transform-origin:0 50%;top:93.42px">20:10:32</div>
<div class="t n" style="right:10.7px;transform-origin:100% 50%;top:93.42px">7.003</div>
<div class="t n" style="left:398.4px;transform-origin:0 50%;top:93.42px">El</div>
<svg style="left:3.6px;top:109.8px" width="7.4" height="7.4" viewBox="0 0 7.4 7.4"><rect x="0.4" y="0.4" width="6.6" height="6.6" fill="#fdfdfe" stroke="#98a2ae" stroke-width="0.8"/><path d="M1.8 3.8 L3.1 5.4 L5.6 1.8" stroke="#2b3f9a" stroke-width="1" fill="none"/></svg>
<div class="t n" style="left:14.8px;transform-origin:0 50%;top:106.74px">9</div>
<div class="t n" style="right:315.8px;transform-origin:100% 50%;top:106.74px">49.43</div>
<div class="t n" style="right:264.8px;transform-origin:100% 50%;top:106.74px">49.88</div>
<div class="t n" style="right:213.6px;transform-origin:100% 50%;top:106.74px">48.98</div>
<div class="t n" style="right:162.6px;transform-origin:100% 50%;top:106.74px">25.90</div>
<div class="t n" style="right:112.1px;transform-origin:100% 50%;top:106.74px">20.0</div>
<div class="t n" style="left:314.6px;transform-origin:0 50%;top:106.74px">20:10:33</div>
<div class="t n" style="right:10.7px;transform-origin:100% 50%;top:106.74px">8.003</div>
<div class="t n" style="left:398.4px;transform-origin:0 50%;top:106.74px">El</div>
<svg style="left:3.6px;top:123.1px" width="7.4" height="7.4" viewBox="0 0 7.4 7.4"><rect x="0.4" y="0.4" width="6.6" height="6.6" fill="#fdfdfe" stroke="#98a2ae" stroke-width="0.8"/><path d="M1.8 3.8 L3.1 5.4 L5.6 1.8" stroke="#2b3f9a" stroke-width="1" fill="none"/></svg>
<div class="t n" style="left:14.8px;transform-origin:0 50%;top:120.06px">10</div>
<div class="t n" style="right:315.8px;transform-origin:100% 50%;top:120.06px">49.25</div>
<div class="t n" style="right:264.8px;transform-origin:100% 50%;top:120.06px">49.69</div>
<div class="t n" style="right:213.6px;transform-origin:100% 50%;top:120.06px">48.81</div>
<div class="t n" style="right:162.6px;transform-origin:100% 50%;top:120.06px">25.86</div>
<div class="t n" style="right:112.1px;transform-origin:100% 50%;top:120.06px">20.0</div>
<div class="t n" style="left:314.6px;transform-origin:0 50%;top:120.06px">20:10:34</div>
<div class="t n" style="right:10.7px;transform-origin:100% 50%;top:120.06px">9.003</div>
<div class="t n" style="left:398.4px;transform-origin:0 50%;top:120.06px">El</div>
<svg style="left:3.6px;top:136.4px" width="7.4" height="7.4" viewBox="0 0 7.4 7.4"><rect x="0.4" y="0.4" width="6.6" height="6.6" fill="#fdfdfe" stroke="#98a2ae" stroke-width="0.8"/><path d="M1.8 3.8 L3.1 5.4 L5.6 1.8" stroke="#2b3f9a" stroke-width="1" fill="none"/></svg>
<div class="t n" style="left:14.8px;transform-origin:0 50%;top:133.38px">11</div>
<div class="t n" style="right:315.8px;transform-origin:100% 50%;top:133.38px">48.98</div>
<div class="t n" style="right:264.8px;transform-origin:100% 50%;top:133.38px">49.45</div>
<div class="t n" style="right:213.6px;transform-origin:100% 50%;top:133.38px">48.51</div>
<div class="t n" style="right:162.6px;transform-origin:100% 50%;top:133.38px">25.78</div>
<div class="t n" style="right:112.1px;transform-origin:100% 50%;top:133.38px">20.0</div>
<div class="t n" style="left:314.6px;transform-origin:0 50%;top:133.38px">20:10:35</div>
<div class="t n" style="right:10.7px;transform-origin:100% 50%;top:133.38px">10.003</div>
<div class="t n" style="left:398.4px;transform-origin:0 50%;top:133.38px">El</div>
<svg style="left:3.6px;top:149.7px" width="7.4" height="7.4" viewBox="0 0 7.4 7.4"><rect x="0.4" y="0.4" width="6.6" height="6.6" fill="#fdfdfe" stroke="#98a2ae" stroke-width="0.8"/><path d="M1.8 3.8 L3.1 5.4 L5.6 1.8" stroke="#2b3f9a" stroke-width="1" fill="none"/></svg>
<div class="t n" style="left:14.8px;transform-origin:0 50%;top:146.70px">12</div>
<div class="t n" style="right:315.8px;transform-origin:100% 50%;top:146.70px">48.85</div>
<div class="t n" style="right:264.8px;transform-origin:100% 50%;top:146.70px">49.29</div>
<div class="t n" style="right:213.6px;transform-origin:100% 50%;top:146.70px">48.42</div>
<div class="t n" style="right:162.6px;transform-origin:100% 50%;top:146.70px">25.79</div>
<div class="t n" style="right:112.1px;transform-origin:100% 50%;top:146.70px">20.0</div>
<div class="t n" style="left:314.6px;transform-origin:0 50%;top:146.70px">20:10:36</div>
<div class="t n" style="right:10.7px;transform-origin:100% 50%;top:146.70px">11.003</div>
<div class="t n" style="left:398.4px;transform-origin:0 50%;top:146.70px">El</div>
<svg style="left:3.6px;top:163.0px" width="7.4" height="7.4" viewBox="0 0 7.4 7.4"><rect x="0.4" y="0.4" width="6.6" height="6.6" fill="#fdfdfe" stroke="#98a2ae" stroke-width="0.8"/><path d="M1.8 3.8 L3.1 5.4 L5.6 1.8" stroke="#2b3f9a" stroke-width="1" fill="none"/></svg>
<div class="t n" style="left:14.8px;transform-origin:0 50%;top:160.02px">13</div>
<div class="t n" style="right:315.8px;transform-origin:100% 50%;top:160.02px">48.68</div>
<div class="t n" style="right:264.8px;transform-origin:100% 50%;top:160.02px">49.11</div>
<div class="t n" style="right:213.6px;transform-origin:100% 50%;top:160.02px">48.25</div>
<div class="t n" style="right:162.6px;transform-origin:100% 50%;top:160.02px">25.72</div>
<div class="t n" style="right:112.1px;transform-origin:100% 50%;top:160.02px">20.0</div>
<div class="t n" style="left:314.6px;transform-origin:0 50%;top:160.02px">20:10:37</div>
<div class="t n" style="right:10.7px;transform-origin:100% 50%;top:160.02px">12.003</div>
<div class="t n" style="left:398.4px;transform-origin:0 50%;top:160.02px">El</div>
<svg style="left:3.6px;top:176.4px" width="7.4" height="7.4" viewBox="0 0 7.4 7.4"><rect x="0.4" y="0.4" width="6.6" height="6.6" fill="#fdfdfe" stroke="#98a2ae" stroke-width="0.8"/><path d="M1.8 3.8 L3.1 5.4 L5.6 1.8" stroke="#2b3f9a" stroke-width="1" fill="none"/></svg>
<div class="t n" style="left:14.8px;transform-origin:0 50%;top:173.34px">14</div>
<div class="t n" style="right:315.8px;transform-origin:100% 50%;top:173.34px">48.57</div>
<div class="t n" style="right:264.8px;transform-origin:100% 50%;top:173.34px">49.00</div>
<div class="t n" style="right:213.6px;transform-origin:100% 50%;top:173.34px">48.13</div>
<div class="t n" style="right:162.6px;transform-origin:100% 50%;top:173.34px">25.79</div>
<div class="t n" style="right:112.1px;transform-origin:100% 50%;top:173.34px">20.0</div>
<div class="t n" style="left:314.6px;transform-origin:0 50%;top:173.34px">20:10:38</div>
<div class="t n" style="right:10.7px;transform-origin:100% 50%;top:173.34px">13.003</div>
<div class="t n" style="left:398.4px;transform-origin:0 50%;top:173.34px">El</div>
<svg style="left:3.6px;top:189.7px" width="7.4" height="7.4" viewBox="0 0 7.4 7.4"><rect x="0.4" y="0.4" width="6.6" height="6.6" fill="#fdfdfe" stroke="#98a2ae" stroke-width="0.8"/><path d="M1.8 3.8 L3.1 5.4 L5.6 1.8" stroke="#2b3f9a" stroke-width="1" fill="none"/></svg>
<div class="t n" style="left:14.8px;transform-origin:0 50%;top:186.66px">15</div>
<div class="t n" style="right:315.8px;transform-origin:100% 50%;top:186.66px">48.32</div>
<div class="t n" style="right:264.8px;transform-origin:100% 50%;top:186.66px">48.75</div>
<div class="t n" style="right:213.6px;transform-origin:100% 50%;top:186.66px">47.89</div>
<div class="t n" style="right:162.6px;transform-origin:100% 50%;top:186.66px">25.66</div>
<div class="t n" style="right:112.1px;transform-origin:100% 50%;top:186.66px">20.0</div>
<div class="t n" style="left:314.6px;transform-origin:0 50%;top:186.66px">20:10:39</div>
<div class="t n" style="right:10.7px;transform-origin:100% 50%;top:186.66px">14.003</div>
<div class="t n" style="left:398.4px;transform-origin:0 50%;top:186.66px">El</div>
<svg style="left:3.6px;top:203.0px" width="7.4" height="7.4" viewBox="0 0 7.4 7.4"><rect x="0.4" y="0.4" width="6.6" height="6.6" fill="#fdfdfe" stroke="#98a2ae" stroke-width="0.8"/><path d="M1.8 3.8 L3.1 5.4 L5.6 1.8" stroke="#2b3f9a" stroke-width="1" fill="none"/></svg>
<div class="t n" style="left:14.8px;transform-origin:0 50%;top:199.98px">16</div>
<div class="t n" style="right:315.8px;transform-origin:100% 50%;top:199.98px">48.16</div>
<div class="t n" style="right:264.8px;transform-origin:100% 50%;top:199.98px">48.58</div>
<div class="t n" style="right:213.6px;transform-origin:100% 50%;top:199.98px">47.73</div>
<div class="t n" style="right:162.6px;transform-origin:100% 50%;top:199.98px">25.64</div>
<div class="t n" style="right:112.1px;transform-origin:100% 50%;top:199.98px">20.0</div>
<div class="t n" style="left:314.6px;transform-origin:0 50%;top:199.98px">20:10:40</div>
<div class="t n" style="right:10.7px;transform-origin:100% 50%;top:199.98px">15.003</div>
<div class="t n" style="left:398.4px;transform-origin:0 50%;top:199.98px">El</div>
</div>
<div style="left:590.8px;top:332.6px;width:6.5px;height:205.8px;background:#f3f5f8;border-left:1px solid #dde1e6"></div>
<div style="left:592.0px;top:333.5px;width:4.5px;height:5.0px;background:#9aa3ae;border-radius:2px"></div>
<svg style="left:591.3px;top:530.5px" width="6" height="5" viewBox="0 0 6 5"><path d="M0.8 1 L3 3.6 L5.2 1" stroke="#8f99a5" stroke-width="0.9" fill="none"/></svg>
<div style="left:186.0px;top:538.4px;width:411.3px;height:6.2px;background:#eef1f5;border-left:1px solid #b9c0c8"></div>
<div style="left:196.0px;top:539.4px;width:251.0px;height:4.2px;background:#8f9aa7;border-radius:2.1px"></div>
<svg style="left:188.5px;top:538.9px" width="5" height="5.4" viewBox="0 0 5 5.4"><path d="M3.8 0.6 L1.2 2.7 L3.8 4.8" stroke="#8f99a5" stroke-width="0.9" fill="none"/></svg>
<svg style="left:584.8px;top:538.9px" width="5" height="5.4" viewBox="0 0 5 5.4"><path d="M1.2 0.6 L3.8 2.7 L1.2 4.8" stroke="#8f99a5" stroke-width="0.9" fill="none"/></svg>
<div class="pnl" style="left:603.3px;top:286.0px;width:411.4px;height:258.7px;"></div>
<div class="hdr" style="left:603.3px;top:286.0px;width:411.4px;height:15.6px;"></div>
<div class="t" style="left:610.0px;transform-origin:0 50%;top:286.68px;font-size:9.00px;font-weight:bold;color:#fff">Charts</div>
<div style="left:965.4px;top:287.6px;width:12.8px;height:12.6px;background:#1b93db"></div>
<div class="t" style="left:871.8px;width:200px;text-align:center;transform-origin:50% 50%;top:286.98px;font-size:7.52px;color:#e6f2fb;font-weight:bold">1:1</div>
<div style="left:982.5px;top:287.6px;width:12.8px;height:12.6px;background:#1b93db;"><svg style="left:0;top:0" width="12.8" height="12.6" viewBox="0 0 13 13"><g transform="translate(6.5 6.5)"><circle r="2.55" fill="none" stroke="#fff" stroke-width="1.35"/><circle r="0.55" fill="#bfe0f6"/><rect x="-0.85" y="-4.35" width="1.7" height="1.5" fill="#fff" transform="rotate(0)"/><rect x="-0.85" y="-4.35" width="1.7" height="1.5" fill="#fff" transform="rotate(45)"/><rect x="-0.85" y="-4.35" width="1.7" height="1.5" fill="#fff" transform="rotate(90)"/><rect x="-0.85" y="-4.35" width="1.7" height="1.5" fill="#fff" transform="rotate(135)"/><rect x="-0.85" y="-4.35" width="1.7" height="1.5" fill="#fff" transform="rotate(180)"/><rect x="-0.85" y="-4.35" width="1.7" height="1.5" fill="#fff" transform="rotate(225)"/><rect x="-0.85" y="-4.35" width="1.7" height="1.5" fill="#fff" transform="rotate(270)"/><rect x="-0.85" y="-4.35" width="1.7" height="1.5" fill="#fff" transform="rotate(315)"/></g></svg></div>
<div style="left:1000.3px;top:288.6px;width:11.4px;height:11.4px;"><svg style="left:0;top:0" width="11.4" height="11.4" viewBox="0 0 13 13"><path d="M1 4 V1.5 H3.5 M9.5 1.5 H12 V4 M12 9 V11.5 H9.5 M3.5 11.5 H1 V9" stroke="#d3dae2" stroke-width="1" fill="none"/><rect x="3" y="3.6" width="7" height="5.8" fill="none" stroke="#dde3ea" stroke-width="1"/><rect x="3" y="3.2" width="7" height="2" fill="#eef1f5"/></svg></div>
<div style="left:603.3px;top:301.5px;width:411.4px;height:13.3px;background:#d5dbe0"></div>
<svg style="left:612px;top:304.5px" width="14" height="7" viewBox="0 0 14 7"><path d="M0.8 3.6 L2.3 5.4 L5 1.2" stroke="#444" stroke-width="0.9" fill="none"/><rect x="8.5" y="1.3" width="4.4" height="4.4" fill="#163a66"/></svg>
<div class="t" style="left:629.0px;transform-origin:0 50%;top:300.98px;font-size:9.00px;color:#2a2a2a">water (Air)</div>
<div style="left:603.3px;top:314.8px;width:411.4px;height:11.4px;background:#eef0f4"></div>
<div class="t" style="right:355.6px;transform-origin:100% 50%;top:313.28px;font-size:9.00px;color:#2a2a2a;font-weight:bold">CA(M) [°]</div>
<svg style="left:675.2px;top:319.8px" width="4" height="3" viewBox="0 0 4 3"><path d="M0 0.3 H4 L2 2.7Z" fill="#222"/></svg>
<div style="left:634.6px;top:326.2px;width:377.2px;height:196.4px;background:#f0f3f7;border:1px solid #d0d5db"></div>
<div style="left:635.4px;top:327.0px;width:375.6px;height:20.8px;background:#e3e6ea"></div>
<div style="left:635.4px;top:382.7px;width:375.6px;height:35.0px;background:#e3e6ea"></div>
<div style="left:635.4px;top:452.7px;width:375.6px;height:35.0px;background:#e3e6ea"></div>
<div class="t" style="right:402.8px;transform-origin:100% 50%;top:517.64px;font-size:7.10px;line-height:10px;height:10px;transform:scaleX(0.86);color:#2a2a2a">0.00</div>
<div class="t" style="right:402.8px;transform-origin:100% 50%;top:482.60px;font-size:7.10px;line-height:10px;height:10px;transform:scaleX(0.86);color:#2a2a2a">10.00</div>
<div class="t" style="right:402.8px;transform-origin:100% 50%;top:447.56px;font-size:7.10px;line-height:10px;height:10px;transform:scaleX(0.86);color:#2a2a2a">20.00</div>
<div class="t" style="right:402.8px;transform-origin:100% 50%;top:412.52px;font-size:7.10px;line-height:10px;height:10px;transform:scaleX(0.86);color:#2a2a2a">30.00</div>
<div class="t" style="right:402.8px;transform-origin:100% 50%;top:377.48px;font-size:7.10px;line-height:10px;height:10px;transform:scaleX(0.86);color:#2a2a2a">40.00</div>
<div class="t" style="right:402.8px;transform-origin:100% 50%;top:342.44px;font-size:7.10px;line-height:10px;height:10px;transform:scaleX(0.86);color:#2a2a2a">50.00</div>
<div style="left:623.6px;top:522.1px;width:2.6px;height:0.7px;background:#b9bfc7"></div>
<div style="left:625.1px;top:515.1px;width:1.1px;height:0.7px;background:#b9bfc7"></div>
<div style="left:625.1px;top:508.1px;width:1.1px;height:0.7px;background:#b9bfc7"></div>
<div style="left:625.1px;top:501.1px;width:1.1px;height:0.7px;background:#b9bfc7"></div>
<div style="left:625.1px;top:494.1px;width:1.1px;height:0.7px;background:#b9bfc7"></div>
<div style="left:623.6px;top:487.1px;width:2.6px;height:0.7px;background:#b9bfc7"></div>
<div style="left:625.1px;top:480.1px;width:1.1px;height:0.7px;background:#b9bfc7"></div>
<div style="left:625.1px;top:473.1px;width:1.1px;height:0.7px;background:#b9bfc7"></div>
<div style="left:625.1px;top:466.1px;width:1.1px;height:0.7px;background:#b9bfc7"></div>
<div style="left:625.1px;top:459.1px;width:1.1px;height:0.7px;background:#b9bfc7"></div>
<div style="left:623.6px;top:452.1px;width:2.6px;height:0.7px;background:#b9bfc7"></div>
<div style="left:625.1px;top:445.1px;width:1.1px;height:0.7px;background:#b9bfc7"></div>
<div style="left:625.1px;top:438.1px;width:1.1px;height:0.7px;background:#b9bfc7"></div>
<div style="left:625.1px;top:431.0px;width:1.1px;height:0.7px;background:#b9bfc7"></div>
<div style="left:625.1px;top:424.0px;width:1.1px;height:0.7px;background:#b9bfc7"></div>
<div style="left:623.6px;top:417.0px;width:2.6px;height:0.7px;background:#b9bfc7"></div>
<div style="left:625.1px;top:410.0px;width:1.1px;height:0.7px;background:#b9bfc7"></div>
<div style="left:625.1px;top:403.0px;width:1.1px;height:0.7px;background:#b9bfc7"></div>
<div style="left:625.1px;top:396.0px;width:1.1px;height:0.7px;background:#b9bfc7"></div>
<div style="left:625.1px;top:389.0px;width:1.1px;height:0.7px;background:#b9bfc7"></div>
<div style="left:623.6px;top:382.0px;width:2.6px;height:0.7px;background:#b9bfc7"></div>
<div style="left:625.1px;top:375.0px;width:1.1px;height:0.7px;background:#b9bfc7"></div>
<div style="left:625.1px;top:368.0px;width:1.1px;height:0.7px;background:#b9bfc7"></div>
<div style="left:625.1px;top:361.0px;width:1.1px;height:0.7px;background:#b9bfc7"></div>
<div style="left:625.1px;top:354.0px;width:1.1px;height:0.7px;background:#b9bfc7"></div>
<div style="left:623.6px;top:346.9px;width:2.6px;height:0.7px;background:#b9bfc7"></div>
<div style="left:625.1px;top:339.9px;width:1.1px;height:0.7px;background:#b9bfc7"></div>
<div style="left:625.1px;top:332.9px;width:1.1px;height:0.7px;background:#b9bfc7"></div>
<div style="left:628.0px;top:332.8px;width:5.3px;height:183.8px;background:#9ba4ae;border-radius:2.6px"></div>
<div style="left:629.0px;top:333.8px;width:3.3px;height:3.6px;background:#fff;border-radius:1.8px"></div>
<div style="left:629.0px;top:511.6px;width:3.3px;height:3.6px;background:#fff;border-radius:1.8px"></div>
<svg style="left:627.6px;top:517.6px" width="6" height="4.4" viewBox="0 0 6 4.4"><path d="M0.6 0.8 L3 3.4 L5.4 0.8" stroke="#8f99a5" stroke-width="1" fill="none"/></svg>
<div style="left:640.4px;top:524.8px;width:371.4px;height:5.0px;background:#9ba4ae;border-radius:2.5px"></div>
<div style="left:642.2px;top:525.7px;width:3.6px;height:3.2px;background:#fff;border-radius:1.6px"></div>
<div style="left:1004.0px;top:525.7px;width:3.6px;height:3.2px;background:#fff;border-radius:1.6px"></div>
<svg style="left:635.6px;top:524.6px" width="4.6" height="5.4" viewBox="0 0 4.6 5.4"><path d="M3.6 0.6 L1 2.7 L3.6 4.8" stroke="#8f99a5" stroke-width="1" fill="none"/></svg>
<div style="left:634.6px;top:530.4px;width:377.0px;height:0.7px;background:#bcc2ca"></div>
<div style="left:655.2px;top:530.6px;width:0.7px;height:2.8px;background:#aab1ba"></div>
<div style="left:666.3px;top:530.6px;width:0.7px;height:1.4px;background:#aab1ba"></div>
<div style="left:677.4px;top:530.6px;width:0.7px;height:1.4px;background:#aab1ba"></div>
<div style="left:688.5px;top:530.6px;width:0.7px;height:1.4px;background:#aab1ba"></div>
<div style="left:699.6px;top:530.6px;width:0.7px;height:1.4px;background:#aab1ba"></div>
<div style="left:710.7px;top:530.6px;width:0.7px;height:2.8px;background:#aab1ba"></div>
<div style="left:721.8px;top:530.6px;width:0.7px;height:1.4px;background:#aab1ba"></div>
<div style="left:732.8px;top:530.6px;width:0.7px;height:1.4px;background:#aab1ba"></div>
<div style="left:743.9px;top:530.6px;width:0.7px;height:1.4px;background:#aab1ba"></div>
<div style="left:755.0px;top:530.6px;width:0.7px;height:1.4px;background:#aab1ba"></div>
<div style="left:766.1px;top:530.6px;width:0.7px;height:2.8px;background:#aab1ba"></div>
<div style="left:777.2px;top:530.6px;width:0.7px;height:1.4px;background:#aab1ba"></div>
<div style="left:788.3px;top:530.6px;width:0.7px;height:1.4px;background:#aab1ba"></div>
<div style="left:799.4px;top:530.6px;width:0.7px;height:1.4px;background:#aab1ba"></div>
<div style="left:810.4px;top:530.6px;width:0.7px;height:1.4px;background:#aab1ba"></div>
<div style="left:821.5px;top:530.6px;width:0.7px;height:2.8px;background:#aab1ba"></div>
<div style="left:832.6px;top:530.6px;width:0.7px;height:1.4px;background:#aab1ba"></div>
<div style="left:843.7px;top:530.6px;width:0.7px;height:1.4px;background:#aab1ba"></div>
<div style="left:854.8px;top:530.6px;width:0.7px;height:1.4px;background:#aab1ba"></div>
<div style="left:865.9px;top:530.6px;width:0.7px;height:1.4px;background:#aab1ba"></div>
<div style="left:877.0px;top:530.6px;width:0.7px;height:2.8px;background:#aab1ba"></div>
<div style="left:888.0px;top:530.6px;width:0.7px;height:1.4px;background:#aab1ba"></div>
<div style="left:899.1px;top:530.6px;width:0.7px;height:1.4px;background:#aab1ba"></div>
<div style="left:910.2px;top:530.6px;width:0.7px;height:1.4px;background:#aab1ba"></div>
<div style="left:921.3px;top:530.6px;width:0.7px;height:1.4px;background:#aab1ba"></div>
<div style="left:932.4px;top:530.6px;width:0.7px;height:2.8px;background:#aab1ba"></div>
<div style="left:943.5px;top:530.6px;width:0.7px;height:1.4px;background:#aab1ba"></div>
<div style="left:954.5px;top:530.6px;width:0.7px;height:1.4px;background:#aab1ba"></div>
<div style="left:965.6px;top:530.6px;width:0.7px;height:1.4px;background:#aab1ba"></div>
<div style="left:976.7px;top:530.6px;width:0.7px;height:1.4px;background:#aab1ba"></div>
<div style="left:987.8px;top:530.6px;width:0.7px;height:2.8px;background:#aab1ba"></div>
<div style="left:998.9px;top:530.6px;width:0.7px;height:1.4px;background:#aab1ba"></div>
<div style="left:1010.0px;top:530.6px;width:0.7px;height:1.4px;background:#aab1ba"></div>
<div class="t" style="left:611.0px;width:200px;text-align:center;transform-origin:50% 50%;top:533.20px;font-size:7.50px;line-height:10px;height:10px;transform:scaleX(0.82);color:#2a2a2a">50</div>
<div class="t" style="left:666.5px;width:200px;text-align:center;transform-origin:50% 50%;top:533.20px;font-size:7.50px;line-height:10px;height:10px;transform:scaleX(0.82);color:#2a2a2a">100</div>
<div class="t" style="left:777.3px;width:200px;text-align:center;transform-origin:50% 50%;top:533.20px;font-size:7.50px;line-height:10px;height:10px;transform:scaleX(0.82);color:#2a2a2a">200</div>
<div class="t" style="left:832.7px;width:200px;text-align:center;transform-origin:50% 50%;top:533.20px;font-size:7.50px;line-height:10px;height:10px;transform:scaleX(0.82);color:#2a2a2a">250</div>
<div class="t" style="left:888.2px;width:200px;text-align:center;transform-origin:50% 50%;top:533.20px;font-size:7.50px;line-height:10px;height:10px;transform:scaleX(0.82);color:#2a2a2a">300</div>
<div class="t" style="left:778.6px;transform-origin:0 50%;top:531.08px;font-size:9.00px;font-weight:bold;color:#2a2a2a">StepNumber</div>
<svg style="left:833.5px;top:537.6px" width="4" height="3" viewBox="0 0 4 3"><path d="M0 0.3 H4 L2 2.7Z" fill="#222"/></svg>
<svg style="left:0;top:0" width="1024" height="576" viewBox="0 0 1024 576"><path d="M662.3 347.3 L672.2 352.6 L683.3 357.8 L694.4 362.4 L711.0 368.7 L733.2 374.6 L766.5 382.0 L799.7 389.7 L833.0 396.7 L881.7 404.8 L916.1 410.0 L944.9 414.6 L946.0 424.0 L947.1 424.4 L977.1 428.2" fill="none" stroke="#17508f" stroke-width="1.25" stroke-linejoin="round"/></svg>
<svg style="left:700.6px;top:321.6px" width="11" height="17" viewBox="0 0 11 17"><path d="M0.8 0.8 V13 L3.7 10.3 L5.9 15.6 L7.9 14.7 L5.7 9.6 H9.6Z" fill="#fff" stroke="#222" stroke-width="0.9" stroke-linejoin="round"/></svg>
<svg style="left:1004.1px;top:275.4px" width="15" height="16.6" viewBox="0 0 15 16.6"><path d="M7.7 0 H15 V16.6 H7.7 L0 8.3Z" fill="#cfd4da"/><path d="M12.2 2.2 L5 8.3 L12.2 14.4" stroke="#f6f7f9" stroke-width="1.8" fill="none"/></svg>
<svg style="left:591.4px;top:537px" width="18" height="13.6" viewBox="0 0 18 13.6"><rect width="18" height="13.6" fill="#c6cdd5"/><path d="M2.2 3 L9 9.8 L15.8 3" stroke="#f3f5f8" stroke-width="1.8" fill="none"/></svg>
<svg style="left:591.6px;top:15.8px" width="17.4" height="13.4" viewBox="0 0 17.4 13.4"><rect width="17.4" height="13.4" fill="#c3cad3"/><path d="M2 10.5 L8.7 3.8 L15.4 10.5" stroke="#f3f5f8" stroke-width="1.8" fill="none"/></svg>
<div style="left:366.0px;top:224.0px;width:292.5px;height:106.4px;background:rgba(19,37,61,0.885);border:1px solid rgba(20,50,90,0.6);-webkit-backdrop-filter:blur(1.6px);backdrop-filter:blur(1.6px)"></div>
<svg style="left:371.8px;top:231.4px;will-change:transform" width="13.8" height="13.8" viewBox="0 0 13.8 13.8"><circle cx="6.9" cy="6.9" r="6.9" fill="#1d9be3"/><text x="6.9" y="10.2" font-family="Liberation Serif" font-weight="bold" font-size="9.6" fill="#fff" text-anchor="middle">i</text></svg>
<div class="t" style="left:392.9px;transform-origin:0 50%;top:231.87px;font-size:12.19px;transform:scaleX(0.886);color:#2a9ae0">Reanalyzing steps</div>
<div class="t" style="left:399.3px;transform-origin:0 50%;top:269.78px;font-size:9.00px;transform:scaleX(0.89);color:#fff">40 out of 301 steps remaining.</div>
<div style="left:585.8px;top:311.5px;width:69.3px;height:15.5px;background:linear-gradient(180deg,#1c98e0,#148bd3)"></div>
<div class="t" style="left:520.5px;width:200px;text-align:center;transform-origin:50% 50%;top:312.58px;font-size:9.45px;color:#fff">Stop</div>
</div></body></html>
